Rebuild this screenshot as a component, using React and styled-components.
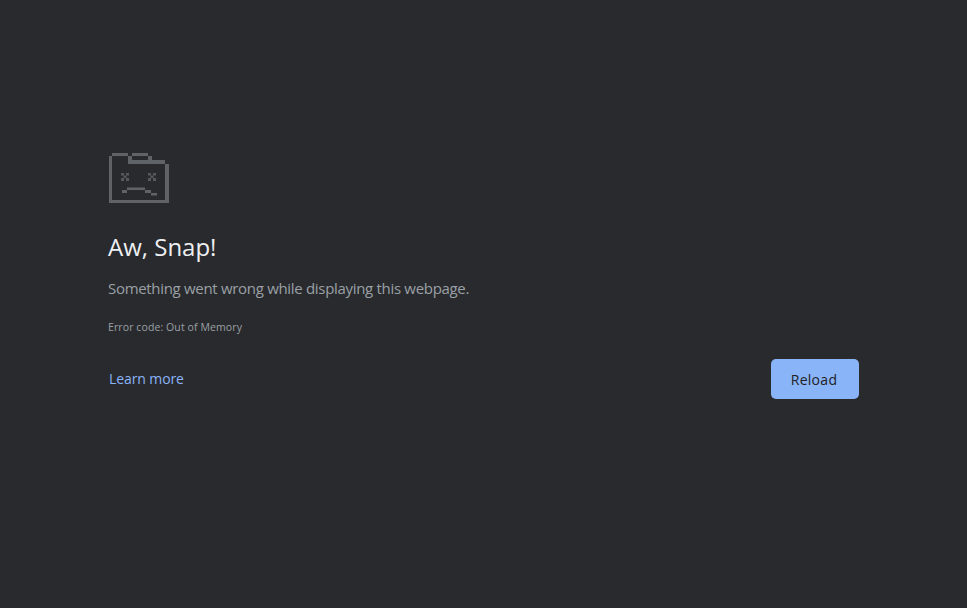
import React from "react";
import styled, { createGlobalStyle } from "styled-components";

const Global = createGlobalStyle`
  html, body { margin: 0; height: 100%; background: #292a2d; }
  #root { min-height: 100%; }
`;

const Page = styled.main`
  box-sizing: border-box;
  height: 608px;
  padding: 153px 108px 0 108px;
  background: #292a2d;
  font-family: "Open Sans", "Noto Sans", sans-serif;
`;

const SadFolder = styled.svg`
  display: block;
  width: 60px;
  height: 50px;
  margin: 0 0 28px 1px;
`;

const Title = styled.h1`
  margin: 0 0 15px;
  font-size: 24px;
  line-height: 32px;
  font-weight: 400;
  color: #eef0f3;
`;

const Message = styled.p`
  margin: 0 0 22px;
  font-size: 15px;
  line-height: 20px;
  color: #9aa0a6;
  letter-spacing: -0.31px;
`;

const ErrorCode = styled.div`
  font-size: 10.5px;
  line-height: 14px;
  color: #9aa0a6;
  letter-spacing: 0.1px;
`;

const Actions = styled.div`
  display: flex;
  align-items: center;
  justify-content: space-between;
  margin-top: 25px;
`;

const LearnMore = styled.a`
  padding-left: 1px;
  font-size: 14px;
  line-height: 20px;
  color: #8ab4f8;
  text-decoration: none;
  letter-spacing: -0.1px;
`;

const Reload = styled.button`
  width: 88px;
  height: 40px;
  padding: 0 2px 0 0;
  border: 0;
  border-radius: 5px;
  background: #8ab4f8;
  color: #202124;
  font: 400 14px "Open Sans", "Noto Sans", sans-serif;
  letter-spacing: 0.3px;
`;

export default function App() {
  return (
    <>
      <Global />
      <Page>
        <SadFolder viewBox="0 0 60 50" aria-hidden="true">
          <g fill="#5f6368">
            <path d="M3 0h16v3H3zM23 0h16v3H23zM0 3h3v44h53V11h4v39H0zM19 3h4v4h16V3h4v4h13v4H19z" />
            <path d="M13 37h5v-2.5h18V37h6v3h6v2.5h-6V40h-6v-3H18v3h-5z" />
          </g>
          <g fill="#5f6368" opacity=".8">
            <path d="M12 20h3v2.5h-3zM17 20h3v2.5h-3zM14.5 22.5h3V25h-3zM12 25h3v3h-3zM17 25h3v3h-3z" />
            <path d="M39 20h3v2.5h-3zM44 20h3v2.5h-3zM41.5 22.5h3V25h-3zM39 25h3v3h-3zM44 25h3v3h-3z" />
          </g>
        </SadFolder>
        <Title>Aw, Snap!</Title>
        <Message>Something went wrong while displaying this webpage.</Message>
        <ErrorCode>Error code: Out of Memory</ErrorCode>
        <Actions>
          <LearnMore href="#">Learn more</LearnMore>
          <Reload type="button">Reload</Reload>
        </Actions>
      </Page>
    </>
  );
}
